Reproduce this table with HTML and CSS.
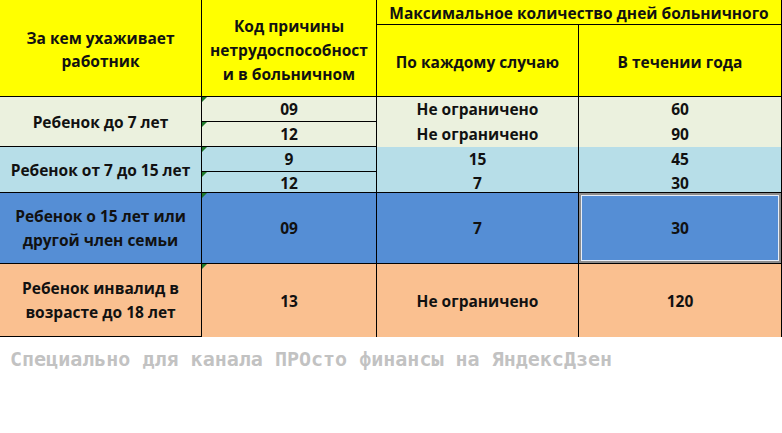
FILE: index.html
```html
<!DOCTYPE html>
<html lang="ru">
<head>
<meta charset="utf-8">
<title>Больничный по уходу</title>
<link rel="stylesheet" href="styles.css">
</head>
<body>
<div class="sheet">
  <div class="cell hdr h-who">За кем ухаживает<br>работник</div>
  <div class="cell hdr h-code">Код причины<br>нетрудоспособност<br>и в больничном</div>
  <div class="cell hdr h-max">Максимальное количество дней больничного</div>
  <div class="cell hdr h-case">По каждому случаю</div>
  <div class="cell hdr h-year">В течении года</div>

  <div class="cell green who r3-4">Ребенок до 7 лет</div>
  <div class="cell green code small bb">09</div>
  <div class="cell green val small">Не ограничено</div>
  <div class="cell green val last small">60</div>
  <div class="cell green code small bb">12</div>
  <div class="cell green val small">Не ограничено</div>
  <div class="cell green val last small">90</div>

  <div class="cell lblue who r5-6">Ребенок от 7 до 15 лет</div>
  <div class="cell lblue code small bb">9</div>
  <div class="cell lblue val small">15</div>
  <div class="cell lblue val last small">45</div>
  <div class="cell lblue code short bb">12</div>
  <div class="cell lblue val short bb">7</div>
  <div class="cell lblue val last short bb">30</div>

  <div class="cell dblue who bb">Ребенок о 15 лет или<br>другой член семьи</div>
  <div class="cell dblue code bb">09</div>
  <div class="cell dblue val bb">7</div>
  <div class="cell dblue val last bb selected">30</div>

  <div class="cell orange who">Ребенок инвалид в<br>возрасте до 18 лет</div>
  <div class="cell orange code">13</div>
  <div class="cell orange val">Не ограничено</div>
  <div class="cell orange val last">120</div>
</div>
<p class="credit">Специально для канала ПРОсто финансы на ЯндексДзен</p>
</body>
</html>
```
FILE: styles.css
```css
html, body {
  margin: 0;
  padding: 0;
  background: #ffffff;
}

.sheet {
  display: grid;
  grid-template-columns: 202px 175px 202px 203px;
  grid-template-rows: 25px 72px 25px 25px 25px 21px 71px 73px;
  width: 782px;
  font-family: "Open Sans", "Noto Sans", sans-serif;
  font-weight: 700;
  font-size: 15.5px;
  color: #111111;
}

.cell {
  box-sizing: border-box;
  position: relative;
  display: flex;
  align-items: center;
  justify-content: center;
  text-align: center;
  line-height: 24px;
  border-right: 1px solid #000;
  overflow: hidden;
  white-space: nowrap;
}

.hdr {
  background: #ffff00;
  border-bottom: 1px solid #000;
}

.h-who { grid-column: 1; grid-row: 1 / 3; line-height: 23px; padding-top: 3px; }
.h-code { grid-column: 2; grid-row: 1 / 3; line-height: 24px; padding-top: 3px; }
.h-max { grid-column: 3 / 5; grid-row: 1; padding-top: 1px; }
.h-case { grid-column: 3; grid-row: 2; padding-top: 3px; }
.h-year { grid-column: 4; grid-row: 2; padding-top: 3px; }

.who { grid-column: 1; border-bottom: 1px solid #000; }
.r3-4 { grid-row: 3 / 5; }
.r5-6 { grid-row: 5 / 7; }

.code { grid-column: 2; }
.last { grid-column: 4; }

.small {
  display: block;
  line-height: 25px;
}

.short {
  display: block;
  line-height: 18px;
  padding-top: 2px;
}

.bb { border-bottom: 1px solid #000; }

.code::before {
  content: "";
  position: absolute;
  left: 0;
  top: 0;
  border-top: 5px solid #1f7a2a;
  border-right: 5px solid transparent;
}

.green { background: #ebf1de; }
.lblue { background: #b7dee8; }
.dblue { background: #558ed5; }
.orange { background: #fac090; }

.selected {
  box-shadow: inset 0 0 0 2px #8c8c8c, inset 0 0 0 3px #e8eef8;
}

.credit {
  margin: 0;
  padding: 8px 0 0 10px;
  font-family: "DejaVu Sans Mono", "Liberation Mono", monospace;
  font-weight: 700;
  font-size: 20px;
  line-height: 28px;
  color: #c2c2c2;
  white-space: nowrap;
}
```
